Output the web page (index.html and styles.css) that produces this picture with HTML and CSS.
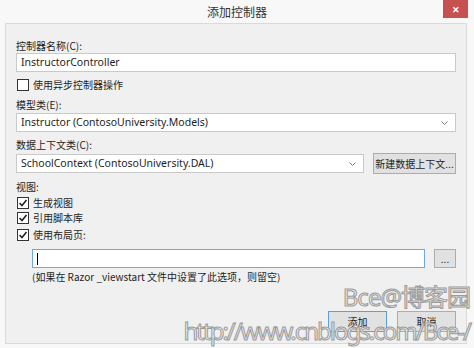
FILE: index.html
```html
<!DOCTYPE html>
<html lang="zh-CN">

<head>
    <meta charset="UTF-8">
    <meta name="viewport" content="width=device-width, initial-scale=1.0">
    <title>添加控制器</title>
    <link rel="stylesheet" href="styles.css">
</head>

<body>
    <div class="window">
        <div class="titlebar">
            <span></span>
            <span class="title">添加控制器</span>
            <span class="close-wrap"><span class="close">&#x2715;</span></span>
        </div>

        <div class="panel">
            <div class="label first">控制器名称(C):</div>
            <div class="textbox">InstructorController</div>

            <div class="check async"><span class="box"></span>使用异步控制器操作</div>

            <div class="label">模型类(E):</div>
            <div class="select">
                <span>Instructor (ContosoUniversity.Models)</span>
                <svg class="arrow" width="7" height="4" viewBox="0 0 7 4"><path d="M0.5 0.5 L3.5 3.5 L6.5 0.5" fill="none" stroke="#777" stroke-width="1"/></svg>
            </div>

            <div class="label">数据上下文类(C):</div>
            <div class="row">
                <div class="select grow">
                    <span>SchoolContext (ContosoUniversity.DAL)</span>
                    <svg class="arrow" width="7" height="4" viewBox="0 0 7 4"><path d="M0.5 0.5 L3.5 3.5 L6.5 0.5" fill="none" stroke="#777" stroke-width="1"/></svg>
                </div>
                <button class="btn new-ctx">新建数据上下文...</button>
            </div>

            <div class="label views">视图:</div>
            <div class="check"><span class="box checked"><svg width="10" height="10" viewBox="0 0 10 10"><path d="M1.5 5 L4 7.5 L8.5 2" fill="none" stroke="#222" stroke-width="1.6"/></svg></span>生成视图</div>
            <div class="check"><span class="box checked"><svg width="10" height="10" viewBox="0 0 10 10"><path d="M1.5 5 L4 7.5 L8.5 2" fill="none" stroke="#222" stroke-width="1.6"/></svg></span>引用脚本库</div>
            <div class="check layout"><span class="box checked"><svg width="10" height="10" viewBox="0 0 10 10"><path d="M1.5 5 L4 7.5 L8.5 2" fill="none" stroke="#222" stroke-width="1.6"/></svg></span>使用布局页:</div>

            <div class="indent">
                <div class="row">
                    <div class="textbox focus grow"><span class="caret"></span></div>
                    <button class="btn dots">...</button>
                </div>
                <div class="hint">(如果在 Razor _viewstart 文件中设置了此选项，则留空)</div>
            </div>

            <div class="actions">
                <button class="btn default">添加</button>
                <button class="btn">取消</button>
            </div>

            <div class="watermark top">Bce@博客园</div>
            <div class="watermark url">http://www.cnblogs.com/Bce-/</div>
        </div>
    </div>
</body>

</html>
```

FILE: styles.css
```css
body {
    margin: 0;
    background: #f8f8f8;
    font-family: "Noto Sans", "Noto Sans CJK SC", sans-serif;
    font-size: 10px;
    color: #1e1e1e;
}

.window {
    width: 474px;
    height: 348px;
    overflow: hidden;
}

.titlebar {
    height: 23px;
    display: grid;
    grid-template-columns: 1fr auto 1fr;
    align-items: start;
}

.title {
    font-family: "Noto Sans CJK SC", sans-serif;
    font-size: 12px;
    line-height: 23px;
    color: #333;
}

.close-wrap {
    display: flex;
    justify-content: flex-end;
    padding-right: 6px;
}

.close {
    width: 25px;
    height: 18px;
    background: #c75050;
    color: #fff;
    font-size: 9px;
    font-weight: bold;
    display: flex;
    align-items: center;
    justify-content: center;
}

.panel {
    position: relative;
    margin: 0 7px 0 5px;
    height: 304px;
    border: 1px solid #dadada;
    background: #f0f0f0;
    padding: 15px 10px 0 10px;
}

.label {
    font-family: "Noto Sans CJK SC", sans-serif;
    line-height: 14px;
    margin-top: 6px;
    margin-bottom: 1px;
}

.label.first {
    margin-top: 0;
    margin-bottom: 0;
}

.textbox,
.select {
    box-sizing: border-box;
    height: 19px;
    background: #fff;
    border: 1px solid #c9c9c9;
    padding: 0 4px;
    line-height: 17px;
    font-size: 10.5px;
    white-space: nowrap;
}

.select {
    display: flex;
    justify-content: space-between;
    align-items: center;
}

.arrow {
    margin-right: 3px;
}

.check {
    display: flex;
    align-items: center;
    gap: 4px;
    height: 15px;
    padding-left: 1px;
    font-family: "Noto Sans CJK SC", sans-serif;
}

.check.async {
    margin-top: 5px;
}

.check.layout {
    margin-top: 2px;
}

.box {
    box-sizing: border-box;
    width: 12px;
    height: 12px;
    border: 1px solid #333;
    background: #fff;
    display: flex;
    align-items: center;
    justify-content: center;
}

.row {
    display: flex;
    align-items: center;
    gap: 9px;
}

.grow {
    flex: 1;
}

.btn {
    box-sizing: border-box;
    height: 21px;
    width: 59px;
    padding: 0;
    border: 1px solid #acacac;
    background: #e1e1e1;
    font-family: "Noto Sans CJK SC", sans-serif;
    font-size: 10px;
    color: #1e1e1e;
    white-space: nowrap;
}

.btn.new-ctx {
    width: 83px;
}

.btn.dots {
    width: 22px;
    height: 19px;
    line-height: 10px;
}

.btn.default {
    border-color: #5a9fe0;
}

.indent {
    padding-left: 16px;
    margin-top: 7px;
}

.textbox.focus {
    border-color: #6ea8e0;
    display: flex;
    align-items: center;
}

.caret {
    width: 1px;
    height: 12px;
    background: #000;
}

.hint {
    font-family: "Noto Sans CJK SC", sans-serif;
    line-height: 14px;
    margin-top: 2px;
}

.actions {
    display: flex;
    justify-content: flex-end;
    gap: 10px;
    margin-top: 27px;
}

.watermark {
    position: absolute;
    right: -4px;
    font-family: "Noto Sans", "Noto Sans CJK SC", sans-serif;
    color: #ececec;
    -webkit-text-stroke: 1px #9a9a9a;
    white-space: nowrap;
}

.watermark.top {
    top: 254px;
    font-size: 24px;
    letter-spacing: -1px;
}

.watermark.url {
    top: 290px;
    font-size: 24px;
    letter-spacing: -2px;
}
```
